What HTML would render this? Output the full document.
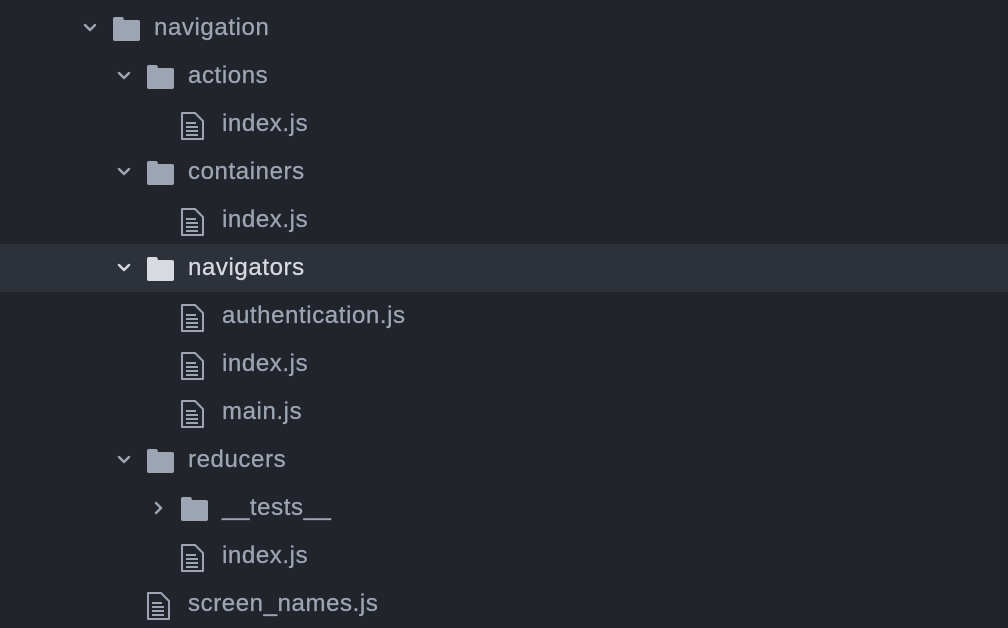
<!DOCTYPE html>
<html><head><style>
body{margin:0;width:1008px;height:626px;background:#21252b;overflow:hidden;font-family:"Liberation Sans",sans-serif;}
.r{position:absolute;left:0;width:1008px;height:48px;}
.hl{background:#2c313a;}
.t{position:absolute;top:0;line-height:47px;font-size:24px;color:#9da5b4;letter-spacing:0.6px;-webkit-text-stroke:0.3px #9da5b4;}
.sel .t{color:#d7dae0;-webkit-text-stroke:0.3px #d7dae0;}
svg{position:absolute;}
</style></head><body>
<svg width="0" height="0" style="position:absolute">
<defs>
<symbol id="fo" viewBox="0 0 28 24"><path d="M1 2 Q1 0 3 0 H10 Q11 0 11.5 1 L12 3 H26 Q28 3 28 5 V22 Q28 24 26 24 H3 Q1 24 1 22 Z"/></symbol>
<symbol id="fi" viewBox="0 0 24 28"><path d="M2 1 H15 L23 9 V27 H2 Z" fill="none" stroke="#9da5b4" stroke-width="2" stroke-linejoin="round"/><path d="M6 11h10M6 15h12M6 19h12M6 23h12" stroke="#9da5b4" stroke-width="2"/></symbol>
<symbol id="cd" viewBox="0 0 14 10"><path d="M2 2 L7 7 L12 2" fill="none" stroke-width="2.4" stroke-linecap="round" stroke-linejoin="round"/></symbol>
<symbol id="cr" viewBox="0 0 10 14"><path d="M2 2 L7 7 L2 12" fill="none" stroke-width="2.4" stroke-linecap="round" stroke-linejoin="round"/></symbol>
</defs></svg>

<div class="r" style="top:4px"><svg style="left:83px;top:19px" width="14" height="10" stroke="#9da5b4"><use href="#cd"/></svg><svg style="left:112px;top:13px" width="28" height="24" fill="#9da5b4"><use href="#fo"/></svg><div class="t" style="left:154px">navigation</div></div>
<div class="r" style="top:52px"><svg style="left:117px;top:19px" width="14" height="10" stroke="#9da5b4"><use href="#cd"/></svg><svg style="left:146px;top:13px" width="28" height="24" fill="#9da5b4"><use href="#fo"/></svg><div class="t" style="left:188px">actions</div></div>
<div class="r" style="top:100px"><svg style="left:180px;top:12px" width="24" height="28"><use href="#fi"/></svg><div class="t" style="left:222px">index.js</div></div>
<div class="r" style="top:148px"><svg style="left:117px;top:19px" width="14" height="10" stroke="#9da5b4"><use href="#cd"/></svg><svg style="left:146px;top:13px" width="28" height="24" fill="#9da5b4"><use href="#fo"/></svg><div class="t" style="left:188px">containers</div></div>
<div class="r" style="top:196px"><svg style="left:180px;top:12px" width="24" height="28"><use href="#fi"/></svg><div class="t" style="left:222px">index.js</div></div>
<div class="r hl sel" style="top:244px"><svg style="left:117px;top:19px" width="14" height="10" stroke="#d7dae0"><use href="#cd"/></svg><svg style="left:146px;top:13px" width="28" height="24" fill="#d7dae0"><use href="#fo"/></svg><div class="t" style="left:188px">navigators</div></div>
<div class="r" style="top:292px"><svg style="left:180px;top:12px" width="24" height="28"><use href="#fi"/></svg><div class="t" style="left:222px">authentication.js</div></div>
<div class="r" style="top:340px"><svg style="left:180px;top:12px" width="24" height="28"><use href="#fi"/></svg><div class="t" style="left:222px">index.js</div></div>
<div class="r" style="top:388px"><svg style="left:180px;top:12px" width="24" height="28"><use href="#fi"/></svg><div class="t" style="left:222px">main.js</div></div>
<div class="r" style="top:436px"><svg style="left:117px;top:19px" width="14" height="10" stroke="#9da5b4"><use href="#cd"/></svg><svg style="left:146px;top:13px" width="28" height="24" fill="#9da5b4"><use href="#fo"/></svg><div class="t" style="left:188px">reducers</div></div>
<div class="r" style="top:484px"><svg style="left:154px;top:17px" width="10" height="14" stroke="#9da5b4"><use href="#cr"/></svg><svg style="left:180px;top:13px" width="28" height="24" fill="#9da5b4"><use href="#fo"/></svg><div class="t" style="left:222px">__tests__</div></div>
<div class="r" style="top:532px"><svg style="left:180px;top:12px" width="24" height="28"><use href="#fi"/></svg><div class="t" style="left:222px">index.js</div></div>
<div class="r" style="top:580px"><svg style="left:146px;top:12px" width="24" height="28"><use href="#fi"/></svg><div class="t" style="left:188px">screen_names.js</div></div>
</body></html>
